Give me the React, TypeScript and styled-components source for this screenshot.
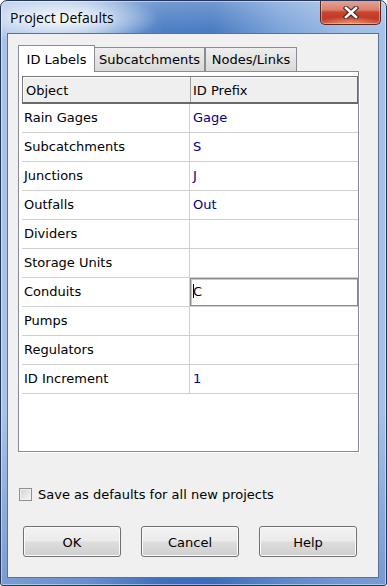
import React from "react";
import styled, { createGlobalStyle } from "styled-components";

const Global = createGlobalStyle`
  html, body { margin: 0; padding: 0; background: #ffffff; }
  body { font-family: "DejaVu Sans", "Liberation Sans", sans-serif; font-size: 13px; color: #000; }
  * { box-sizing: border-box; }
`;

const Window = styled.div`
  width: 387px;
  height: 586px;
  border: 1px solid #24375a;
  border-radius: 7px 7px 3px 3px;
  overflow: hidden;
  display: flex;
  flex-direction: column;
  box-shadow: inset 0 0 0 1px rgba(255, 255, 255, 0.45);
  background:
    radial-gradient(ellipse 95px 26px at 62px 18px, rgba(255, 255, 255, 0.9) 0%, rgba(255, 255, 255, 0.55) 45%, rgba(255, 255, 255, 0) 100%),
    linear-gradient(180deg, rgba(255, 255, 255, 0.22) 0px, rgba(255, 255, 255, 0) 30px),
    linear-gradient(180deg, rgba(0, 0, 0, 0) 70%, rgba(30, 80, 170, 0.35) 100%),
    linear-gradient(90deg, #aac4e7 0%, #8fb1df 22%, #4d7fc5 42%, #4a7cc3 55%, #7aa3d9 72%, #9dbbe4 88%, #a6c2e8 100%);
`;

const TitleBar = styled.div`
  height: 32px;
  flex: none;
  display: flex;
  align-items: flex-start;
  justify-content: space-between;
  padding: 0 5px 0 9px;
`;

const Title = styled.div`
  font-family: "Open Sans", "DejaVu Sans", sans-serif;
  font-size: 14px;
  line-height: 18px;
  margin-top: 8px;
  color: #000;
  text-shadow: 0 0 6px rgba(255, 255, 255, 0.9);
`;

const CloseButton = styled.div`
  width: 61px;
  height: 25px;
  margin-top: -1px;
  border: 1px solid #5a2620;
  border-top: none;
  border-radius: 0 0 5px 5px;
  display: flex;
  align-items: center;
  justify-content: center;
  box-shadow: inset 0 0 0 1px rgba(255, 220, 210, 0.45);
  background:
    radial-gradient(ellipse 30px 8px at 50% 100%, rgba(255, 170, 120, 0.7), rgba(255, 170, 120, 0)),
    linear-gradient(180deg, #e7a695 0%, #d9826f 40%, #c8442f 52%, #c0392a 75%, #cf5a43 100%);
`;

const Client = styled.div`
  flex: 1;
  margin: 0 7px 7px 6px;
  border: 1px solid #5b7194;
  background: #f0f0f0;
  display: flex;
  flex-direction: column;
  padding: 11px 19px 0 10px;
`;

const TabStrip = styled.div`
  display: flex;
  align-items: flex-end;
  height: 27px;
  margin-bottom: -1px;
  position: relative;
  z-index: 1;
`;

const Tab = styled.div<{ $active?: boolean; $w: number; $noLeft?: boolean }>`
  width: ${(p) => p.$w}px;
  height: ${(p) => (p.$active ? 27 : 24)}px;
  margin-bottom: ${(p) => (p.$active ? 0 : 1)}px;
  border: 1px solid #898c95;
  border-bottom: none;
  ${(p) => (p.$noLeft ? "border-left: none;" : "")}
  background: ${(p) => (p.$active ? "#ffffff" : "linear-gradient(180deg, #eeeeee 0%, #e4e4e4 50%, #dadada 100%)")};
  display: flex;
  align-items: center;
  justify-content: center;
  white-space: nowrap;
  font-size: 13px;
`;

const Panel = styled.div`
  width: 341px;
  height: 381px;
  border: 1px solid #898c95;
  box-shadow: 1px 1px 0 #ffffff;
  background: #ffffff;
  padding: 4px 0 0 3px;
  display: flex;
  flex-direction: column;
`;

const Grid = styled.div`
  flex: 1;
  display: flex;
  flex-direction: column;
`;

const HeaderRow = styled.div`
  display: grid;
  grid-template-columns: 168px 1fr;
  height: 28px;
  border-top: 1px solid #7a7a7a;
  border-left: 1px solid #7a7a7a;
  border-right: 1px solid #6a6a6a;
  border-bottom: 2px solid #6a6a6a;
  background: #efefef;
  box-shadow: inset 1px 1px 0 #fdfdfd;
`;

const HeaderCell = styled.div<{ $first?: boolean }>`
  display: flex;
  align-items: center;
  padding-left: ${(p) => (p.$first ? 3 : 2)}px;
  padding-top: 1px;
  ${(p) => (p.$first ? "border-right: 1px solid #a0a0a0;" : "")}
  white-space: nowrap;
`;

const Row = styled.div`
  display: grid;
  grid-template-columns: 168px 1fr;
  height: 29px;
  border-bottom: 1px solid #d0d0d0;
`;

const NameCell = styled.div`
  display: flex;
  align-items: center;
  padding: 0 0 2px 2px;
  border-right: 1px solid #d0d0d0;
  white-space: nowrap;
`;

const ValueCell = styled.div`
  display: flex;
  align-items: center;
  padding: 0 0 2px 3px;
  color: #000080;
  white-space: nowrap;
`;

const EditBox = styled.div`
  height: 28px;
  border: 1px solid #8a8a8a;
  box-shadow: inset 1px 1px 0 #c9c9c9;
  background: #ffffff;
  display: flex;
  align-items: center;
  padding: 0 0 2px 2px;
  color: #000;
`;

const Caret = styled.span`
  display: inline-block;
  width: 1px;
  height: 14px;
  background: #000;
  margin-right: -1px;
`;

const CheckRow = styled.label`
  display: flex;
  align-items: center;
  height: 16px;
  margin-top: 34px;
  margin-left: 1px;
  gap: 6px;
  white-space: nowrap;
`;

const CheckBox = styled.span`
  width: 13px;
  height: 13px;
  border: 1px solid #8e8f8f;
  background: linear-gradient(135deg, #cfd1d4 0%, #e6e7e8 55%, #f7f7f7 100%);
  box-shadow: inset 0 0 0 1px #f2f2f2;
  flex: none;
`;

const ButtonRow = styled.div`
  display: flex;
  gap: 20px;
  margin-top: 24px;
  margin-left: 5px;
`;

const Button = styled.div`
  width: 98px;
  height: 31px;
  border: 1px solid #707070;
  border-radius: 3px;
  background: linear-gradient(180deg, #f2f2f2 0%, #ebebeb 48%, #dddddd 52%, #cfcfcf 100%);
  box-shadow: inset 0 0 0 1px #fbfbfb;
  display: flex;
  align-items: center;
  justify-content: center;
  padding-top: 1px;
  font-size: 13px;
`;

const rows: { name: string; value?: string; edit?: boolean }[] = [
  { name: "Rain Gages", value: "Gage" },
  { name: "Subcatchments", value: "S" },
  { name: "Junctions", value: "J" },
  { name: "Outfalls", value: "Out" },
  { name: "Dividers" },
  { name: "Storage Units" },
  { name: "Conduits", value: "C", edit: true },
  { name: "Pumps" },
  { name: "Regulators" },
  { name: "ID Increment", value: "1" },
];

const CloseX = () => (
  <svg width="16" height="13" viewBox="0 0 16 13">
    <path d="M3 2 L13 11 M13 2 L3 11" stroke="#3a2a28" strokeWidth="4.6" strokeLinecap="square" fill="none" />
    <path d="M3 2 L13 11 M13 2 L3 11" stroke="#ffffff" strokeWidth="2.6" strokeLinecap="square" fill="none" />
  </svg>
);

export default function App() {
  return (
    <>
      <Global />
      <Window>
        <TitleBar>
          <Title>Project Defaults</Title>
          <CloseButton>
            <CloseX />
          </CloseButton>
        </TitleBar>
        <Client>
          <TabStrip>
            <Tab $active $w={77}>ID Labels</Tab>
            <Tab $w={110} $noLeft>Subcatchments</Tab>
            <Tab $w={92}>Nodes/Links</Tab>
          </TabStrip>
          <Panel>
            <Grid>
              <HeaderRow>
                <HeaderCell $first>Object</HeaderCell>
                <HeaderCell>ID Prefix</HeaderCell>
              </HeaderRow>
              {rows.map((r) => (
                <Row key={r.name}>
                  <NameCell>{r.name}</NameCell>
                  {r.edit ? (
                    <EditBox>
                      <Caret />
                      {r.value}
                    </EditBox>
                  ) : (
                    <ValueCell>{r.value ?? ""}</ValueCell>
                  )}
                </Row>
              ))}
            </Grid>
          </Panel>
          <CheckRow>
            <CheckBox />
            Save as defaults for all new projects
          </CheckRow>
          <ButtonRow>
            <Button>OK</Button>
            <Button>Cancel</Button>
            <Button>Help</Button>
          </ButtonRow>
        </Client>
      </Window>
    </>
  );
}
